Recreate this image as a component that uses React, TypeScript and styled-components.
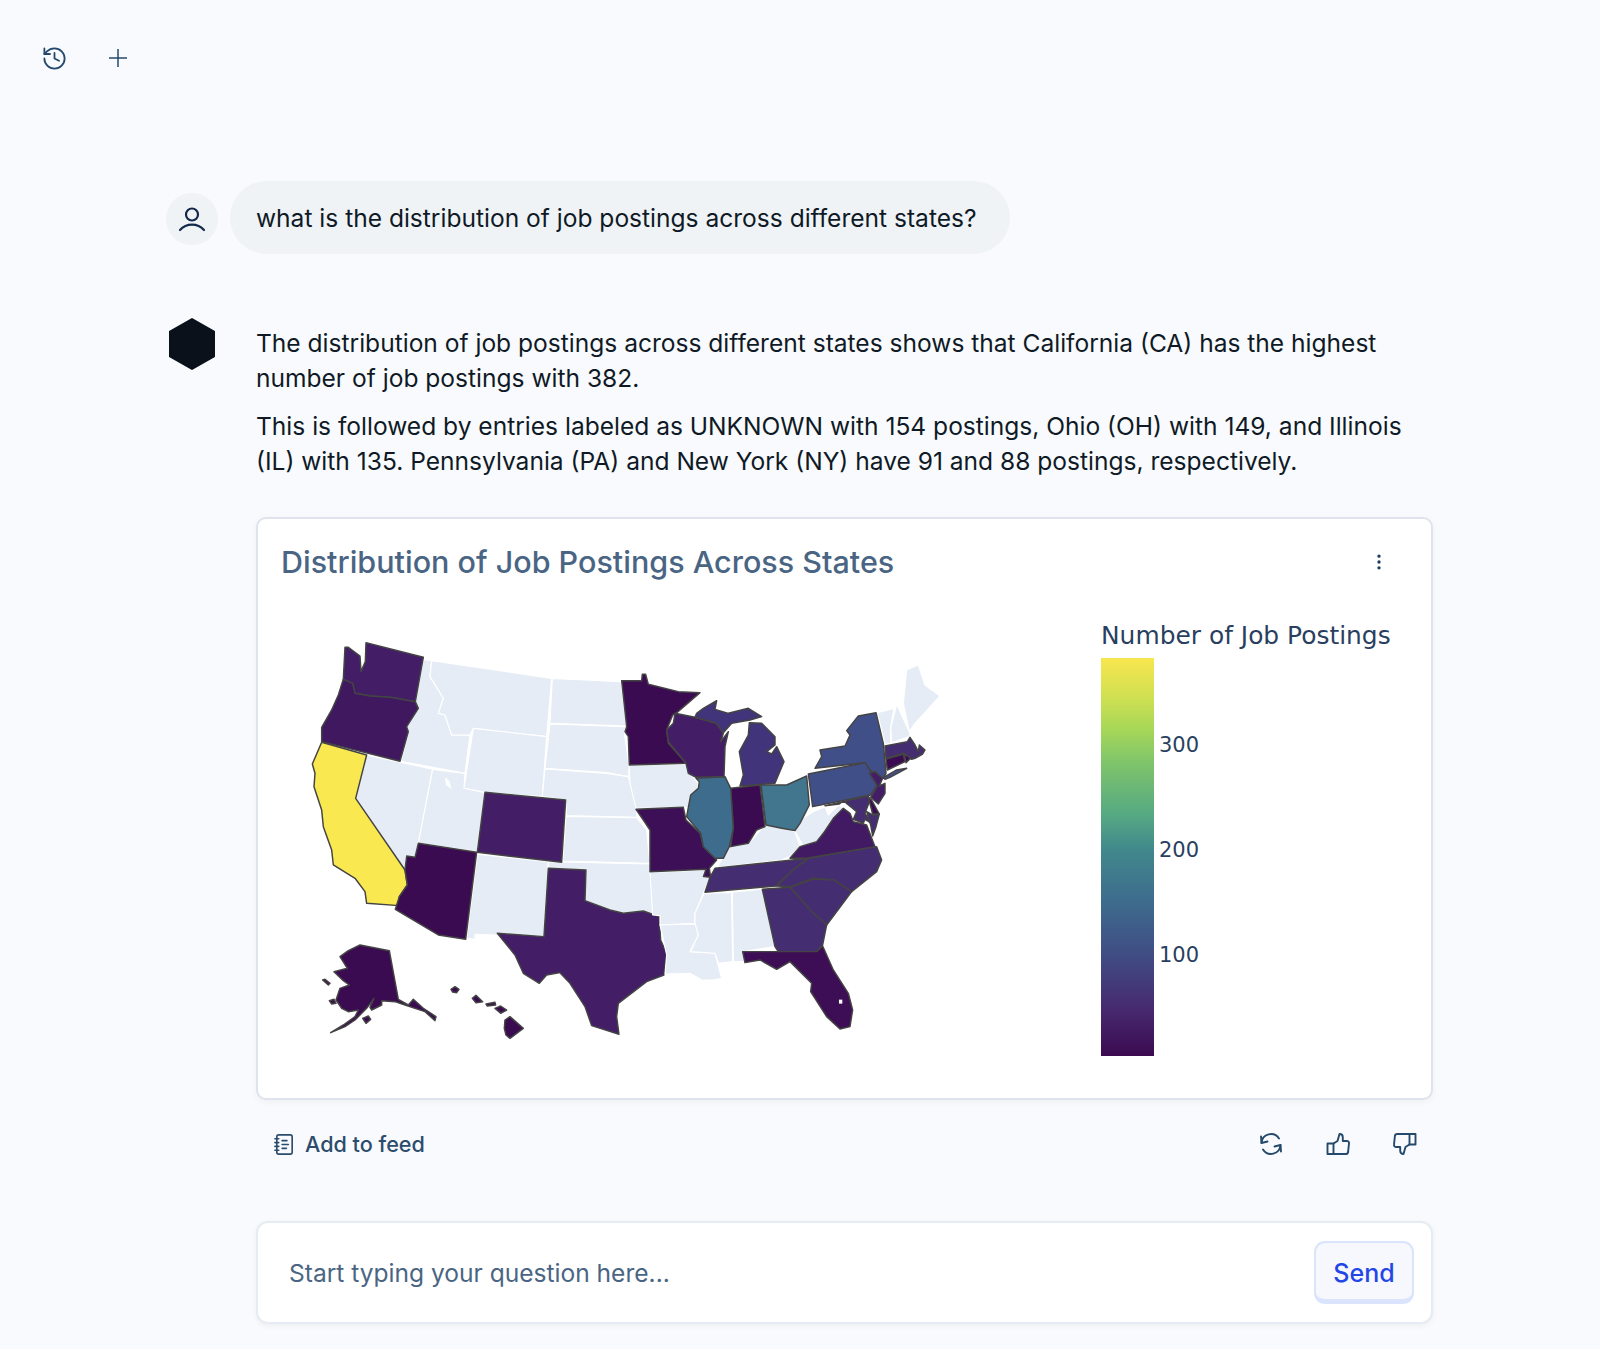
import React from "react";
import styled, { createGlobalStyle } from "styled-components";
import { History, NotebookText, MoreVertical } from "lucide-react";

const Global = createGlobalStyle`
  html, body { margin: 0; padding: 0; background: #f9fafd; }
  body { font-family: Inter, "Liberation Sans", sans-serif; color: #0f1a26; }
  #root { min-height: 1349px; }
`;

const Page = styled.div`
  height: 1349px;
  padding: 46px 167px 0 166px;
  box-sizing: border-box;
  position: relative;
  overflow: hidden;
`;
const Toolbar = styled.div`
  display: flex;
  align-items: center;
  gap: 40px;
  margin-left: -125px;
  height: 24px;
  color: #24496b;
`;
const Conversation = styled.div`
  margin-top: 111px;
  display: flex;
  flex-direction: column;
`;
const UserRow = styled.div`
  display: flex;
  align-items: center;
  gap: 12px;
`;
const UserAvatar = styled.div`
  width: 52px;
  height: 52px;
  margin-top: 2px;
  border-radius: 50%;
  background: #eff3f6;
  display: flex;
  align-items: center;
  justify-content: center;
  color: #13294b;
`;
const Bubble = styled.div`
  height: 73px;
  display: flex;
  align-items: center;
  padding: 0 33px 0 26px;
  border-radius: 37px;
  background: #eff3f6;
  font-size: 24.55px;
`;
const BotRow = styled.div`
  display: grid;
  grid-template-columns: 90px 1fr;
  margin-top: 65px;
`;
const Hexagon = styled.svg`
  width: 48px;
  height: 52px;
  margin: -1px 0 0 2px;
`;
const BotBody = styled.div`
  display: flex;
  flex-direction: column;
  margin-top: 7px;
`;
const Paragraph = styled.p`
  margin: 0 0 13px;
  font-size: 24.55px;
  line-height: 35px;
`;
const ChartCard = styled.div`
  margin-top: 25px;
  height: 583px;
  box-sizing: border-box;
  background: #fff;
  border: 2px solid #dfe3ee;
  border-radius: 10px;
  box-shadow: 0 2px 6px rgba(40, 60, 90, 0.05);
  display: flex;
  flex-direction: column;
`;
const CardHeader = styled.div`
  height: 101px;
  padding: 8px 42px 0 23px;
  box-sizing: border-box;
  display: flex;
  align-items: flex-start;
  justify-content: space-between;
`;
const CardTitle = styled.h2`
  margin: 0;
  font-size: 30.5px;
  line-height: 70px;
  height: 70px;
  font-weight: 500;
  color: #4a6583;
`;
const Kebab = styled.div`
  height: 70px;
  display: flex;
  align-items: center;
  color: #1c3a5e;
`;
const ChartBody = styled.div`
  display: flex;
  align-items: flex-start;
  padding-left: 32px;
`;
const MapSvg = styled.svg`
  width: 680px;
  height: 440px;
  flex: none;
`;
const Legend = styled.div`
  margin-left: 131px;
  margin-top: 1px;
  display: flex;
  flex-direction: column;
  font-family: "DejaVu Sans", Verdana, sans-serif;
  color: #2a3f5f;
`;
const LegendTitle = styled.div`
  font-size: 24.9px;
  line-height: 30px;
  height: 37px;
  white-space: nowrap;
`;
const LegendBody = styled.div`
  display: flex;
  gap: 5px;
`;
const ColorBar = styled.div`
  width: 53px;
  height: 398px;
  background: linear-gradient(
    to top,
    #3b0a50 0%,
    #47296f 11.5%,
    #3f4e85 26%,
    #3e6c8d 39%,
    #41888c 51.8%,
    #55a983 60.5%,
    #7fc46b 73.6%,
    #a6d758 82%,
    #cfe052 90%,
    #f8e64f 100%
  );
`;
const Ticks = styled.div`
  display: flex;
  flex-direction: column;
  gap: 81px;
  padding-top: 75px;
`;
const Tick = styled.div`
  font-size: 21px;
  line-height: 24px;
`;
const ActionRow = styled.div`
  margin-top: 25px;
  height: 38px;
  display: flex;
  align-items: center;
  justify-content: space-between;
  padding: 0 16px 0 17px;
  color: #24496b;
`;
const FeedButton = styled.div`
  display: flex;
  align-items: center;
  gap: 9px;
  font-size: 21.6px;
  font-weight: 500;
  color: #2c4c6d;
`;
const IconGroup = styled.div`
  display: flex;
  gap: 43px;
`;
const InputBox = styled.div`
  margin-top: 58px;
  height: 103px;
  box-sizing: border-box;
  background: #fff;
  border: 2px solid #e6ecf3;
  border-radius: 12px;
  box-shadow: 0 2px 5px rgba(40, 60, 90, 0.06);
  display: flex;
  align-items: center;
  justify-content: space-between;
  padding: 0 17px 0 31px;
`;
const Placeholder = styled.span`
  font-size: 24.55px;
  color: #4a6583;
`;
const SendButton = styled.button`
  width: 100px;
  height: 63px;
  box-sizing: border-box;
  padding: 3px 0 0;
  font: 500 25px Inter, sans-serif;
  color: #2347e6;
  background: #f7f8fe;
  border: 2px solid #dbe4fd;
  border-bottom-width: 5px;
  border-radius: 11px;
`;

type St = { d: string; f?: string };
const D1 = "#3b0b52";
const D2 = "#431e66";
const D3 = "#452d72";
const M1 = "#41347a";
const B1 = "#404f87";
const T1 = "#3e6c8d";
const T2 = "#41768e";
const Y = "#f9e850";
const BASE = "#e5ecf6";

const westBase: string[] = [
  "M230,405 L428,448 L385,670 L375,710 L348,708 L345,750 L197,535 Z",
  "M400,118 L425,122 L420,170 L445,210 L460,235 L445,280 L465,285 L485,345 L540,345 L525,460 L333,424 L355,335 L350,320 L385,265 L376,245 Z",
  "M425,122 L785,175 L770,350 L550,325 L540,345 L485,345 L465,285 L445,280 L460,235 L445,210 L420,170 Z",
  "M550,325 L770,350 L757,530 L585,518 L522,505 Z",
  "M428,448 L525,460 L522,505 L585,518 L562,695 L385,670 Z",
  "M562,703 L775,725 L762,950 L555,943 L555,958 L530,955 Z",
  "M787,175 L993,185 L1010,318 L780,310 Z",
  "M780,312 L1008,320 L1003,340 L1018,440 L1015,470 L950,458 L765,445 Z",
  "M765,447 L950,460 L1015,470 L1040,565 L1040,592 L830,587 L827,540 L757,530 Z",
  "M828,589 L1040,593 L1070,630 L1080,730 L818,723 Z",
  "M775,725 L1080,732 L1090,885 L1060,873 L1000,880 L960,870 L885,842 L888,750 L775,745 Z",
];
const westData: St[] = [
  { d: "M165,82 L175,82 L210,108 L213,155 L226,125 L228,68 L400,112 L376,245 L300,232 L240,228 L195,220 L188,190 L160,178 Z", f: D2 },
  { d: "M160,178 L188,190 L195,220 L240,228 L300,232 L376,245 L385,265 L350,320 L355,335 L330,424 L95,365 L95,322 L125,270 L145,225 Z", f: "#3f1860" },
  { d: "M95,367 L230,405 L197,535 L345,750 L352,795 L328,830 L327,857 L230,850 L225,815 L195,775 L130,735 L125,690 L100,620 L95,570 L72,500 L75,460 L67,432 Z", f: Y },
  { d: "M585,517 L827,540 L815,727 L562,697 Z", f: D2 },
  { d: "M385,670 L560,697 L527,958 L445,945 L316,868 L328,830 L352,795 L345,750 L350,708 L375,712 Z", f: D1 },
  { d: "M775,745 L888,750 L885,842 L960,870 L1000,880 L1060,873 L1108,890 L1112,960 L1130,1000 L1122,1065 L1070,1085 L985,1150 L980,1190 L987,1243 L905,1217 L885,1160 L840,1090 L810,1058 L770,1065 L748,1090 L700,1060 L675,1005 L622,940 L762,950 Z", f: D2 },
];
const alaskaHawaii: St[] = [
  { d: "M115,62 L150,45 L238,62 L265,208 L295,225 L310,208 L340,235 L378,260 L375,272 L345,245 L315,235 L285,225 L255,215 L215,212 L215,225 L185,240 L180,232 L192,205 L170,235 L135,270 L105,290 L62,308 L100,285 L135,260 L145,240 L115,245 L95,235 L78,210 L90,175 L118,165 L100,152 L72,125 L112,115 L90,80 Z", f: D1 },
  { d: "M38,150 L45,148 L60,160 L55,165 Z", f: D1 },
  { d: "M58,212 L72,208 L78,220 L65,222 Z", f: D1 },
  { d: "M158,265 L175,258 L182,268 L168,280 Z", f: D1 },
  { d: "M423,178 L435,170 L447,178 L440,188 L428,186 Z", f: D1 },
  { d: "M487,205 L498,196 L518,215 L498,218 Z", f: D1 },
  { d: "M528,222 L555,217 L557,225 L532,228 Z", f: D1 },
  { d: "M555,235 L572,228 L590,240 L572,250 Z", f: D1 },
  { d: "M585,270 L600,260 L640,295 L600,325 L588,315 L583,295 Z", f: D1 },
];
const eastBase: string[] = [
  "M88,345 L258,342 L262,360 L295,400 L290,425 L270,435 L265,472 L108,475 L90,400 Z",
  "M150,667 L315,660 L308,680 L330,682 L310,730 L285,790 L285,820 L180,825 L180,797 L158,795 Z",
  "M180,825 L287,822 L295,855 L270,905 L345,910 L365,985 L340,990 L305,990 L270,970 L195,972 L200,915 Z",
  "M312,730 L395,727 L398,935 L355,940 L345,910 L272,905 L295,855 L285,820 L285,790 Z",
  "M397,727 L487,718 L525,890 L430,905 L440,935 L400,935 Z",
  "M350,653 L390,590 L445,580 L495,525 L545,525 L585,545 L600,590 L570,620 L545,630 Z",
  "M585,545 L600,510 L640,485 L675,470 L685,495 L715,465 L730,475 L700,505 L670,550 L650,575 L610,590 L600,570 Z",
];
const eastData: St[] = [
  { d: "M65,92 L125,92 L127,73 L137,73 L145,103 L235,125 L300,128 L228,190 L218,195 L200,240 L205,280 L258,340 L88,345 L85,260 L75,245 L80,230 Z", f: D1 },
  { d: "M108,478 L250,472 L258,510 L300,550 L310,590 L350,630 L328,655 L332,682 L310,680 L318,658 L150,665 L150,540 L130,510 Z", f: "#3d0f56" },
  { d: "M345,655 L625,625 L585,655 L535,700 L530,708 L315,727 L330,682 Z", f: D3 },
  { d: "M570,625 L600,590 L650,575 L670,550 L700,505 L730,475 L750,490 L760,515 L800,525 L825,590 L620,625 Z", f: "#411a63" },
  { d: "M625,625 L830,590 L845,630 L830,665 L755,725 L700,690 L640,685 L570,710 L530,708 L585,655 Z", f: D3 },
  { d: "M570,712 L640,687 L700,690 L755,725 L680,825 L640,790 Z", f: D3 },
  { d: "M487,718 L570,712 L640,790 L680,825 L668,885 L650,905 L535,905 L525,890 Z", f: D3 },
  { d: "M428,905 L535,905 L650,905 L668,888 L700,960 L745,1030 L758,1080 L750,1130 L720,1137 L680,1100 L632,1025 L635,1000 L570,935 L530,958 L480,930 L435,938 Z", f: "#3d0e55" },
];
const lakes: St[] = [
  { d: "M45,100 L105,112 L170,130 L190,160 L182,185 L205,155 L195,200 L192,290 L108,292 L85,280 L78,250 L25,185 L20,150 L40,130 Z", f: D2 },
  { d: "M105,112 L110,100 L130,85 L170,62 L165,88 L205,100 L265,85 L305,110 L270,120 L215,130 L190,158 L170,130 Z", f: M1 },
  { d: "M268,128 L305,130 L345,170 L345,195 L320,215 L335,222 L350,200 L372,245 L345,310 L240,318 L250,285 L238,215 L265,165 Z", f: M1 },
  { d: "M303,315 L380,315 L440,288 L448,375 L420,430 L405,452 L365,445 L318,435 Z", f: T2 },
  { d: "M212,325 L300,315 L315,440 L290,450 L265,490 L212,500 L220,445 Z", f: D1 },
  { d: "M108,295 L195,290 L212,325 L220,445 L208,500 L190,535 L165,535 L130,500 L122,460 L80,410 L92,345 L115,325 L118,305 Z", f: T1 },
];
const northeastBase: string[] = [
  "M328,215 L310,130 L320,30 L355,15 L375,75 L420,108 L345,190 Z",
  "M290,133 L328,215 L330,230 L275,248 L272,205 Z",
  "M232,158 L282,145 L272,200 L272,250 L255,253 Z",
];
const northeast: St[] = [
  { d: "M45,325 L65,290 L60,270 L135,258 L150,225 L140,212 L175,168 L228,158 L250,250 L258,340 L250,355 L208,330 L195,308 Z", f: B1 },
  { d: "M250,353 L290,330 L320,325 L270,352 L255,358 Z", f: B1 },
  { d: "M25,342 L195,308 L210,330 L220,355 L232,375 L212,405 L38,440 Z", f: B1 },
  { d: "M208,340 L225,335 L248,355 L238,378 L255,370 L255,400 L235,432 L212,412 L232,378 Z", f: D2 },
  { d: "M75,437 L205,408 L210,420 L195,460 L215,490 L195,478 L190,490 L160,478 L170,455 L130,422 L118,432 Z", f: D3 },
  { d: "M200,455 L218,465 L238,462 L228,500 L218,528 L212,495 Z", f: D3 },
  { d: "M205,412 L215,420 L238,462 L218,462 Z", f: D1 },
  { d: "M255,258 L322,245 L330,232 L345,255 L355,275 L358,255 L375,270 L368,282 L345,295 L335,298 L312,280 L258,295 Z", f: D3 },
  { d: "M258,297 L310,283 L315,305 L262,330 Z", f: D1 },
  { d: "M312,280 L332,295 L318,308 Z", f: D1 },
];

const Region: React.FC<{ x: number; y: number; base?: string[]; data: St[]; children?: React.ReactNode }> = ({ x, y, base = [], data, children }) => (
  <g transform={`translate(${x} ${y}) scale(0.3333)`} strokeLinejoin="round">
    {base.map((d, i) => (
      <path key={i} d={d} fill={BASE} stroke="#fff" strokeWidth={3.4} />
    ))}
    {data.map((s, i) => (
      <path key={i} d={s.d} fill={s.f} stroke="#444" strokeWidth={4.4} />
    ))}
    {children}
  </g>
);

const UserIcon = () => (
  <svg width="30" height="30" viewBox="0 0 30 30" fill="none" stroke="currentColor" strokeWidth="2.2" strokeLinecap="round">
    <circle cx="15" cy="10.5" r="6" />
    <path d="M3 26c3.2-3.6 7.2-5.4 12-5.4S23.800 22.400 27 26" />
  </svg>
);
const PlusIcon = () => (
  <svg width="20" height="20" viewBox="0 0 20 20" fill="none" stroke="currentColor" strokeWidth="1.5">
    <path d="M10 1v18M1 10h18" />
  </svg>
);
const RefreshIcon = () => (
  <svg width="24" height="24" viewBox="0 0 24 24" fill="none" stroke="currentColor" strokeWidth="1.9" strokeLinecap="round" strokeLinejoin="round">
    <path d="M2.500 11A9.500 9.500 0 0 1 20 6.500" />
    <path d="M21.500 13A9.500 9.500 0 0 1 4 17.500" />
    <path d="M2 4.500 2.500 11 8.500 9.500" />
    <path d="M22 19.500 21.500 13 15.500 14.500" />
  </svg>
);
const thumb = "M7.500 11.500 11.500 9 13.500 2c2 0 3.300 1.200 3.300 3.200V9h4c1.400 0 2.400 1 2.200 2.300l-.9 8.700c-.2 1.300-1 2-2.300 2H7.500";
const ThumbUp = () => (
  <svg width="24" height="24" viewBox="0 0 24 24" fill="none" stroke="currentColor" strokeWidth="1.9" strokeLinejoin="round">
    <path d={thumb} />
    <rect x="1.500" y="11.500" width="6" height="10.500" />
  </svg>
);
const ThumbDown = () => (
  <svg width="24" height="24" viewBox="0 0 24 24" fill="none" stroke="currentColor" strokeWidth="1.9" strokeLinejoin="round" transform="rotate(180)">
    <path d={thumb} />
    <rect x="1.500" y="11.500" width="6" height="10.500" />
  </svg>
);

export default function App() {
  return (
    <Page>
      <Global />
      <Toolbar>
        <History size={27} strokeWidth={1.6} />
        <PlusIcon />
      </Toolbar>
      <Conversation>
        <UserRow>
          <UserAvatar>
            <UserIcon />
          </UserAvatar>
          <Bubble>what is the distribution of job postings across different states?</Bubble>
        </UserRow>
        <BotRow>
          <Hexagon viewBox="0 0 48 52">
            <path
              d="M24 1 46 13.500 V38.500 L24 51 2 38.500 V13.500 Z"
              fill="#0a111b"
              stroke="#0a111b"
              strokeWidth="2"
              strokeLinejoin="round"
            />
          </Hexagon>
          <BotBody>
            <Paragraph>
              The distribution of job postings across different states shows that California (CA) has the highest number of job postings with 382.
            </Paragraph>
            <Paragraph>
              This is followed by entries labeled as UNKNOWN with 154 postings, Ohio (OH) with 149, and Illinois (IL) with 135. Pennsylvania (PA) and New York (NY) have 91 and 88 postings, respectively.
            </Paragraph>
            <ChartCard>
              <CardHeader>
                <CardTitle>Distribution of Job Postings Across States</CardTitle>
                <Kebab>
                  <MoreVertical size={20} strokeWidth={2} />
                </Kebab>
              </CardHeader>
              <ChartBody>
                <MapSvg viewBox="290 620 680 440">
                  <Region x={290} y={620} base={westBase} data={westData}>
                    <path d="M465,472 L478,482 L484,507 L468,495 Z" fill="#fff" />
                  </Region>
                  <Region x={310} y={930} data={alaskaHawaii} />
                  <Region x={600} y={650} base={eastBase} data={eastData}>
                    <rect x="717" y="1049" width="10" height="12" fill="#fff" />
                  </Region>
                  <Region x={660} y={680} data={lakes} />
                  <Region x={800} y={660} base={northeastBase} data={northeast} />
                </MapSvg>
                <Legend>
                  <LegendTitle>Number of Job Postings</LegendTitle>
                  <LegendBody>
                    <ColorBar />
                    <Ticks>
                      <Tick>300</Tick>
                      <Tick>200</Tick>
                      <Tick>100</Tick>
                    </Ticks>
                  </LegendBody>
                </Legend>
              </ChartBody>
            </ChartCard>
            <ActionRow>
              <FeedButton>
                <NotebookText size={23} strokeWidth={1.7} />
                Add to feed
              </FeedButton>
              <IconGroup>
                <RefreshIcon />
                <ThumbUp />
                <ThumbDown />
              </IconGroup>
            </ActionRow>
            <InputBox>
              <Placeholder>Start typing your question here...</Placeholder>
              <SendButton>Send</SendButton>
            </InputBox>
          </BotBody>
        </BotRow>
      </Conversation>
    </Page>
  );
}
